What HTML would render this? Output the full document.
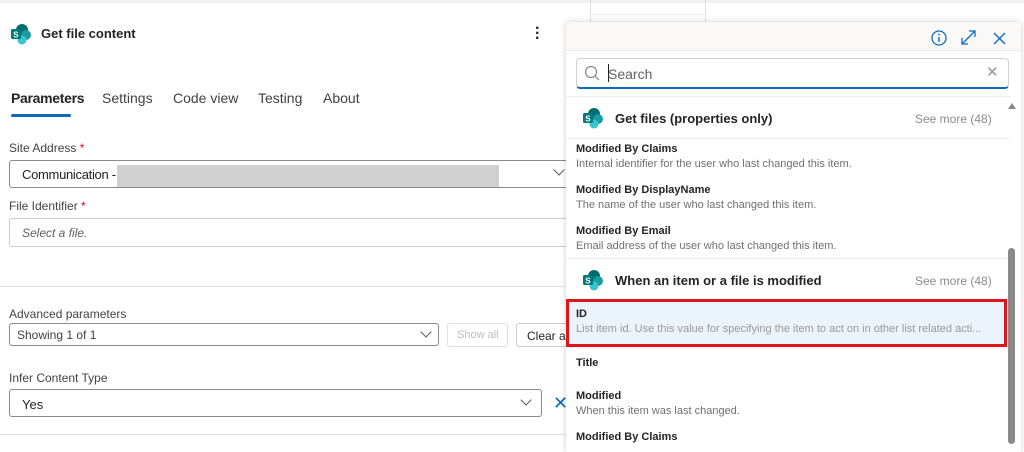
<!DOCTYPE html>
<html><head><style>
*{box-sizing:border-box;margin:0;padding:0}
body{width:1024px;height:444px;overflow:hidden;background:#fff;font-family:"Liberation Sans",sans-serif;position:relative;color:#242424}
.a{position:absolute}
.lbl{font-size:12px;color:#424242}
.box{border:1px solid #8a8a8a;border-radius:3px;background:#fff}
.chev{width:8px;height:8px;border-right:1px solid #555;border-bottom:1px solid #555;transform:rotate(45deg)}
.t{font-size:11px;font-weight:bold;color:#242424}
.d{font-size:11px;color:#707070}
</style></head><body>
<div class="a" style="left:0;top:0;width:1024px;height:3px;background:#f0f0f0"></div>
<div class="a" style="left:590px;top:0;width:1px;height:30px;background:#ddd"></div>
<div class="a" style="left:705px;top:0;width:1px;height:22px;background:#ddd"></div>
<div class="a" style="left:590px;top:14px;width:116px;height:1px;background:#eee"></div>
<svg class="a" style="left:10px;top:23px" width="22" height="22" viewBox="0 0 22 22"><circle cx="12" cy="7" r="6" fill="#036c70"/><circle cx="16" cy="12" r="5" fill="#1a9ba1"/><circle cx="12" cy="17" r="4.5" fill="#37c6d0"/><rect x="1" y="6" width="10" height="10" rx="1.5" fill="#03787c"/><text x="3.3" y="14.5" font-size="8" fill="#fff" font-weight="bold" font-family="Liberation Sans">S</text></svg>
<div class="a" style="left:41px;top:26px;font-size:13px;font-weight:bold">Get file content</div>
<div class="a" style="left:535px;top:26px;font-size:16px;font-weight:bold;line-height:5px;width:4px">·<br>·<br>·</div>
<div class="a" style="left:11px;top:90px;font-size:14px;color:#242424;font-weight:bold;letter-spacing:-.3px">Parameters</div>
<div class="a" style="left:11px;top:114px;width:60px;height:3px;background:#0f6cbd;border-radius:2px"></div>
<div class="a" style="left:102px;top:90px;font-size:14px;color:#424242">Settings</div>
<div class="a" style="left:173px;top:90px;font-size:14px;color:#424242">Code view</div>
<div class="a" style="left:258px;top:90px;font-size:14px;color:#424242">Testing</div>
<div class="a" style="left:323px;top:90px;font-size:14px;color:#424242">About</div>
<div class="a lbl" style="left:9px;top:141px">Site Address <span style="color:#c50f1f">*</span></div>
<div class="a box" style="left:9px;top:160px;width:570px;height:28px"></div>
<div class="a" style="left:22px;top:167px;font-size:13px;letter-spacing:-.3px">Communication - I</div>
<div class="a" style="left:117px;top:165px;width:382px;height:22px;background:#d1d1d1"></div>
<div class="a chev" style="left:555px;top:166px"></div>
<div class="a lbl" style="left:9px;top:199px">File Identifier <span style="color:#c50f1f">*</span></div>
<div class="a box" style="left:9px;top:218px;width:570px;height:29px;border-color:#ccc"></div>
<div class="a" style="left:22px;top:226px;font-size:12px;font-style:italic;color:#616161">Select a file.</div>
<div class="a" style="left:0;top:286px;width:566px;height:1px;background:#e0e0e0"></div>
<div class="a lbl" style="left:9px;top:307px">Advanced parameters</div>
<div class="a box" style="left:9px;top:323px;width:430px;height:23px"></div>
<div class="a" style="left:17px;top:328px;font-size:12px;color:#424242">Showing 1 of 1</div>
<div class="a chev" style="left:422px;top:328px"></div>
<div class="a" style="left:447px;top:323px;width:61px;height:24px;border:1px solid #e0e0e0;border-radius:3px;font-size:11px;color:#bdbdbd;padding:5px 0 0 9px">Show all</div>
<div class="a" style="left:516px;top:323px;width:60px;height:24px;border:1px solid #ccc;border-radius:3px;font-size:12px;color:#242424;padding:5px 0 0 10px">Clear a</div>
<div class="a lbl" style="left:9px;top:371px">Infer Content Type</div>
<div class="a box" style="left:9px;top:389px;width:533px;height:28px"></div>
<div class="a" style="left:22px;top:397px;font-size:13px">Yes</div>
<div class="a chev" style="left:522px;top:396px"></div>
<div class="a" style="left:553px;top:393px;font-size:18px;color:#0f6cbd">✕</div>
<div class="a" style="left:0;top:434px;width:566px;height:1px;background:#e0e0e0"></div>
<div class="a" style="left:566px;top:22px;width:455px;height:430px;background:#fff;box-shadow:0 0 6px rgba(0,0,0,.2);border-radius:4px 4px 0 0"></div>
<div class="a" style="left:566px;top:22px;width:455px;height:29px;background:#faf9f8;border-bottom:1px solid #eee;border-radius:4px 4px 0 0"></div>
<svg class="a" style="left:930px;top:29px" width="80" height="18" viewBox="0 0 80 18"><circle cx="9" cy="9" r="7" fill="none" stroke="#0f6cbd" stroke-width="1.3"/><line x1="9" y1="8" x2="9" y2="13" stroke="#0f6cbd" stroke-width="1.4"/><circle cx="9" cy="5.5" r=".9" fill="#0f6cbd"/><path d="M32 15L45 2M39 2h6v6M32 9v6h6" fill="none" stroke="#0f6cbd" stroke-width="1.3"/><path d="M64 4l11 11M75 4L64 15" stroke="#0f6cbd" stroke-width="1.4"/></svg>
<div class="a" style="left:576px;top:58px;width:433px;height:31px;border:1px solid #d1d1d1;border-bottom:2px solid #0f6cbd;border-radius:4px"></div>
<svg class="a" style="left:584px;top:65px" width="18" height="18" viewBox="0 0 18 18"><circle cx="7" cy="7" r="5.5" fill="none" stroke="#888" stroke-width="1.2"/><line x1="11" y1="11" x2="15" y2="15" stroke="#888" stroke-width="1.2"/></svg>
<div class="a" style="left:608px;top:66px;font-size:14px;color:#616161">Search</div>
<div class="a" style="left:608px;top:64px;width:1px;height:18px;background:#222"></div>
<div class="a" style="left:986px;top:63px;font-size:15px;color:#999">✕</div>
<div class="a" style="left:566px;top:96px;width:445px;height:1px;background:#eee"></div>
<svg class="a" style="left:582px;top:107px" width="22" height="22" viewBox="0 0 22 22"><circle cx="12" cy="7" r="6" fill="#036c70"/><circle cx="16" cy="12" r="5" fill="#1a9ba1"/><circle cx="12" cy="17" r="4.5" fill="#37c6d0"/><rect x="1" y="6" width="10" height="10" rx="1.5" fill="#03787c"/><text x="3.3" y="14.5" font-size="8" fill="#fff" font-weight="bold" font-family="Liberation Sans">S</text></svg>
<div class="a" style="left:615px;top:111px;font-size:13px;font-weight:bold">Get files (properties only)</div>
<div class="a" style="left:915px;top:112px;font-size:12px;color:#8a8a8a">See more (48)</div>
<div class="a" style="left:566px;top:138px;width:445px;height:1px;background:#f0f0f0"></div>
<div class="a t" style="left:576px;top:143px">Modified By Claims</div>
<div class="a d" style="left:576px;top:158px">Internal identifier for the user who last changed this item.</div>
<div class="a t" style="left:576px;top:184px">Modified By DisplayName</div>
<div class="a d" style="left:576px;top:199px">The name of the user who last changed this item.</div>
<div class="a t" style="left:576px;top:225px">Modified By Email</div>
<div class="a d" style="left:576px;top:240px">Email address of the user who last changed this item.</div>
<div class="a" style="left:566px;top:258px;width:445px;height:1px;background:#f0f0f0"></div>
<svg class="a" style="left:582px;top:269px" width="22" height="22" viewBox="0 0 22 22"><circle cx="12" cy="7" r="6" fill="#036c70"/><circle cx="16" cy="12" r="5" fill="#1a9ba1"/><circle cx="12" cy="17" r="4.5" fill="#37c6d0"/><rect x="1" y="6" width="10" height="10" rx="1.5" fill="#03787c"/><text x="3.3" y="14.5" font-size="8" fill="#fff" font-weight="bold" font-family="Liberation Sans">S</text></svg>
<div class="a" style="left:615px;top:273px;font-size:13px;font-weight:bold">When an item or a file is modified</div>
<div class="a" style="left:915px;top:274px;font-size:12px;color:#8a8a8a">See more (48)</div>
<div class="a" style="left:566px;top:299px;width:441px;height:48px;background:#ebf3fc;border:3px solid #e0161e"></div>
<div class="a t" style="left:576px;top:308px">ID</div>
<div class="a d" style="left:576px;top:323px;color:#9a9a9a;white-space:nowrap">List item id. Use this value for specifying the item to act on in other list related acti...</div>
<div class="a t" style="left:576px;top:357px">Title</div>
<div class="a t" style="left:576px;top:390px">Modified</div>
<div class="a d" style="left:576px;top:405px">When this item was last changed.</div>
<div class="a t" style="left:576px;top:431px">Modified By Claims</div>
<div class="a" style="left:1008px;top:103px;width:0;height:0;border-left:4px solid transparent;border-right:4px solid transparent;border-bottom:6px solid #888"></div>
<div class="a" style="left:1008px;top:248px;width:7px;height:196px;background:#8a8a8a;border-radius:4px"></div>
</body></html>
